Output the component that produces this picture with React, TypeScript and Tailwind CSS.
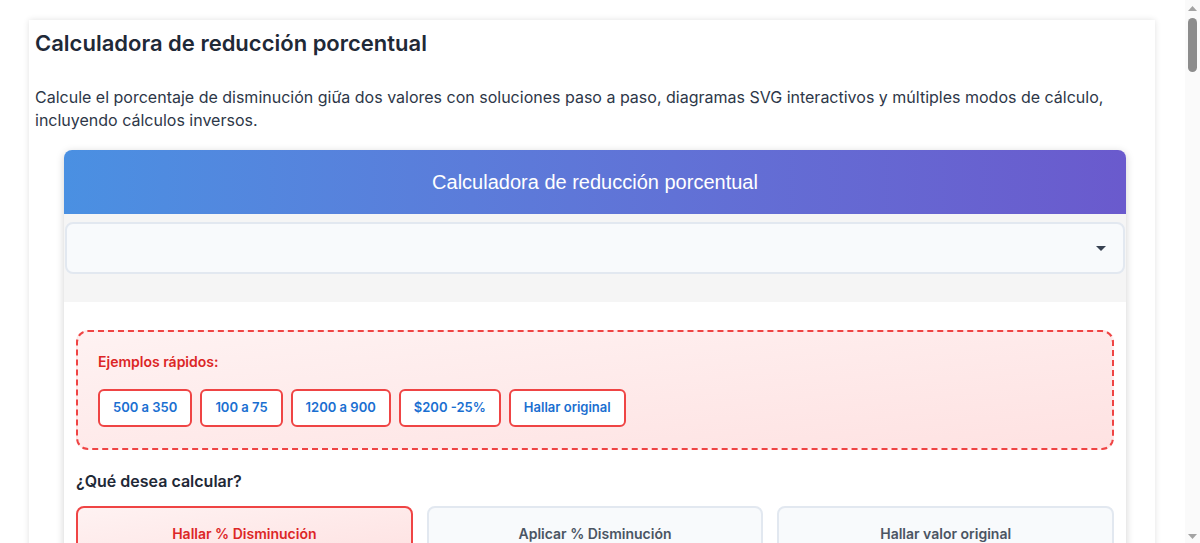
const examples = ['500 a 350', '100 a 75', '1200 a 900', '$200 -25%', 'Hallar original'];

const modes = [
  { label: 'Hallar % Disminución', active: true },
  { label: 'Aplicar % Disminución', active: false },
  { label: 'Hallar valor original', active: false },
];

function Scrollbar() {
  return (
    <div className="w-[15px] h-full bg-[#fafafa] flex flex-col items-center">
      <svg width="9" height="5" viewBox="0 0 9 5" className="mt-[6px]">
        <path d="M0 5h9L4.5 0z" fill="#a3a3a3" />
      </svg>
      <div className="mt-[7px] w-[9px] h-[54px] rounded-full bg-[#8c8c8c]" />
      <div className="flex-1" />
      <svg width="9" height="5" viewBox="0 0 9 5" className="mb-[4px]">
        <path d="M0 0h9L4.5 5z" fill="#a3a3a3" />
      </svg>
    </div>
  );
}

export default function App() {
  return (
    <div className="h-[543px] flex overflow-hidden bg-white font-['Inter',sans-serif] text-[#1f2937]">
      <div className="flex-1 pt-[20px] pl-[29px] pr-[30px]">
        <div className="bg-white shadow-[0_0_6px_rgba(0,0,0,0.12)] pl-[6px] pr-[29px] pt-[8px] pb-10">
          <h1 className="text-[22px] leading-[30px] font-semibold text-[#1f2937]">
            Calculadora de reducción porcentual
          </h1>
          <p className="mt-[28px] text-[16px] leading-[23px] text-[#2d3748]">
            Calcule el porcentaje de disminución giữa dos valores con soluciones paso a paso, diagramas SVG interactivos y
            múltiples modos de cálculo, incluyendo cálculos inversos.
          </p>

          <div className="mt-[18px] ml-[29px] rounded-lg overflow-hidden bg-white shadow-[0_2px_8px_rgba(0,0,0,0.18)]">
            <div className="h-[64px] flex items-center justify-center bg-gradient-to-r from-[#4a90e2] to-[#6a5acd] text-white font-['Liberation_Sans',Arial,sans-serif] text-[20px]">
              Calculadora de reducción porcentual
            </div>
            <div className="bg-[#f5f5f5] pt-[8px] pb-[28px] px-px">
              <div className="h-[52px] rounded-lg border-2 border-[#e2e8f0] bg-[#f8fafc] flex items-center justify-end pr-[17px]">
                <svg width="10" height="5" viewBox="0 0 10 5">
                  <path d="M0 0h10L5 5z" fill="#374151" />
                </svg>
              </div>
            </div>

            <div className="px-[12px] pt-[28px] pb-10">
              <div className="rounded-xl border-2 border-dashed border-[#ef4444] bg-gradient-to-br from-[#fef2f2] to-[#fee2e2] px-[20px] pt-[20px] pb-[21px]">
                <div className="text-[14px] leading-[20px] font-semibold text-[#dc2626]">Ejemplos rápidos:</div>
                <div className="mt-[17px] flex gap-[8px]">
                  {examples.map((e) => (
                    <button
                      key={e}
                      className="h-[38px] px-[13px] rounded-md border-2 border-[#ef4444] bg-white text-[13px] font-semibold text-[#1a6fd1]"
                    >
                      {e}
                    </button>
                  ))}
                </div>
              </div>

              <div className="mt-[19px] text-[16px] leading-[24px] font-semibold text-[#1f2937]">¿Qué desea calcular?</div>
              <div className="mt-[13px] grid grid-cols-3 gap-[14px]">
                {modes.map((m) => (
                  <button
                    key={m.label}
                    className={
                      m.active
                        ? 'h-[54px] rounded-lg border-2 border-[#ef4444] bg-gradient-to-br from-[#fef2f2] to-[#fee2e2] text-[14px] font-semibold text-[#dc2626]'
                        : 'h-[54px] rounded-lg border-2 border-[#e2e8f0] bg-[#f8fafc] text-[14px] font-semibold text-[#4b5563]'
                    }
                  >
                    {m.label}
                  </button>
                ))}
              </div>
            </div>
          </div>
        </div>
      </div>
      <Scrollbar />
    </div>
  );
}
